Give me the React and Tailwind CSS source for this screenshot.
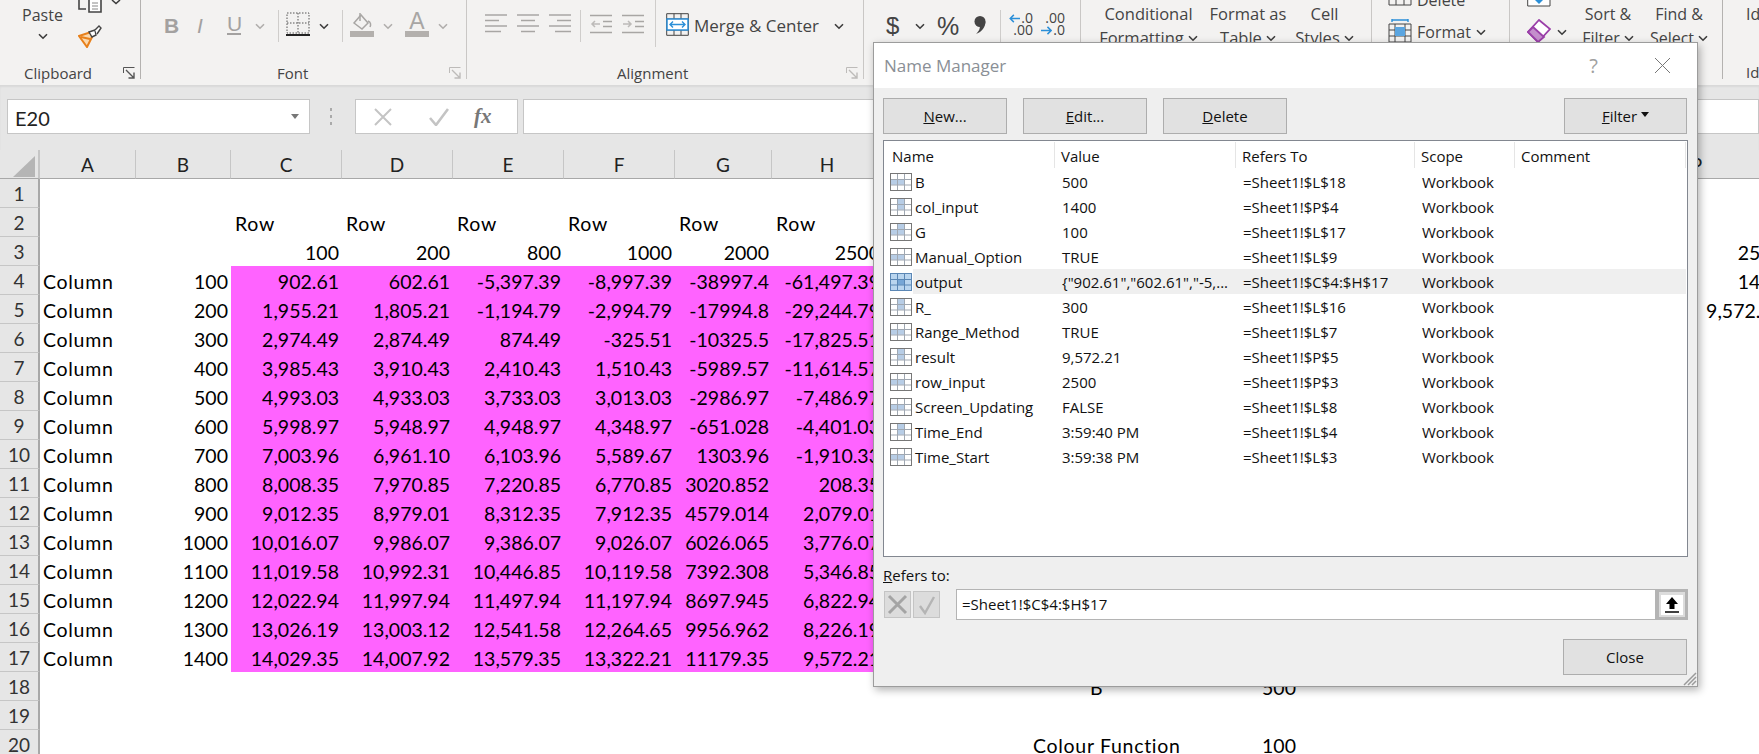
import React from "react";

const ROW_DATA = [
  [100, "902.61", "602.61", "-5,397.39", "-8,997.39", "-38997.4", "-61,497.39"],
  [200, "1,955.21", "1,805.21", "-1,194.79", "-2,994.79", "-17994.8", "-29,244.79"],
  [300, "2,974.49", "2,874.49", "874.49", "-325.51", "-10325.5", "-17,825.51"],
  [400, "3,985.43", "3,910.43", "2,410.43", "1,510.43", "-5989.57", "-11,614.57"],
  [500, "4,993.03", "4,933.03", "3,733.03", "3,013.03", "-2986.97", "-7,486.97"],
  [600, "5,998.97", "5,948.97", "4,948.97", "4,348.97", "-651.028", "-4,401.03"],
  [700, "7,003.96", "6,961.10", "6,103.96", "5,589.67", "1303.96", "-1,910.33"],
  [800, "8,008.35", "7,970.85", "7,220.85", "6,770.85", "3020.852", "208.35"],
  [900, "9,012.35", "8,979.01", "8,312.35", "7,912.35", "4579.014", "2,079.01"],
  [1000, "10,016.07", "9,986.07", "9,386.07", "9,026.07", "6026.065", "3,776.07"],
  [1100, "11,019.58", "10,992.31", "10,446.85", "10,119.58", "7392.308", "5,346.85"],
  [1200, "12,022.94", "11,997.94", "11,497.94", "11,197.94", "8697.945", "6,822.94"],
  [1300, "13,026.19", "13,003.12", "12,541.58", "12,264.65", "9956.962", "8,226.19"],
  [1400, "14,029.35", "14,007.92", "13,579.35", "13,322.21", "11179.35", "9,572.21"],
];

const NAMES = [
  ["B", "500", "=Sheet1!$L$18"],
  ["col_input", "1400", "=Sheet1!$P$4"],
  ["G", "100", "=Sheet1!$L$17"],
  ["Manual_Option", "TRUE", "=Sheet1!$L$9"],
  ["output", '{"902.61","602.61","-5,...', "=Sheet1!$C$4:$H$17"],
  ["R_", "300", "=Sheet1!$L$16"],
  ["Range_Method", "TRUE", "=Sheet1!$L$7"],
  ["result", "9,572.21", "=Sheet1!$P$5"],
  ["row_input", "2500", "=Sheet1!$P$3"],
  ["Screen_Updating", "FALSE", "=Sheet1!$L$8"],
  ["Time_End", "3:59:40 PM", "=Sheet1!$L$4"],
  ["Time_Start", "3:59:38 PM", "=Sheet1!$L$3"],
];

const SHEET_COLS =
  "grid-cols-[40px_96px_95px_111px_111px_111px_111px_97px_111px_147px_160px_109px_331px_156px]";

function Chev({ dark = false, className = "" }) {
  return (
    <svg width="10" height="7" viewBox="0 0 10 7" className={"shrink-0 " + className}>
      <path d="M1 1.2 5 5.2 9 1.2" fill="none" stroke={dark ? "#3c3c3c" : "#b0aeac"} strokeWidth="1.6" />
    </svg>
  );
}

function Launcher({ faded = false, className = "" }) {
  const c = faded ? "#bdbbb9" : "#555";
  return (
    <svg width="12" height="12" viewBox="0 0 12 12" className={"shrink-0 " + className}>
      <path d="M.5 6V.5H11.5" fill="none" stroke={c} />
      <path d="M3 3l7.5 7.5M11 5.5V11H5.5" fill="none" stroke={c} strokeWidth="1.4" />
    </svg>
  );
}

function AlignIcon({ lines }) {
  return (
    <svg width="22" height="22" viewBox="0 0 22 22" className="shrink-0">
      {lines.map(([x1, x2], i) => (
        <path key={i} d={`M${x1} ${2 + i * 5.5}H${x2}`} stroke="#a8a6a4" strokeWidth="1.5" />
      ))}
    </svg>
  );
}

function IndentIcon({ dir }) {
  const arrow = dir === "left" ? "M10 11H2M5 8 2 11l3 3" : "M1 11H9M6 8l3 3-3 3";
  return (
    <svg width="22" height="22" viewBox="0 0 22 22" className="shrink-0">
      <path d="M0 2.5h22M0 19.5h22M13 8.5h9M13 13.5h9" stroke="#a8a6a4" strokeWidth="1.5" />
      <path d={arrow} fill="none" stroke="#bdbbb9" strokeWidth="1.5" />
    </svg>
  );
}

function Sep({ className = "h-[32px] mt-[10px]" }) {
  return <div className={"w-px shrink-0 bg-[#cfcdcb] " + className} />;
}

function SmallArrowNum({ top, bottom, arrowTop }) {
  return (
    <div className="flex flex-col w-[24px] shrink-0 mt-[12px] text-[14px] leading-[12px] text-[#444] text-right">
      <div className="flex items-center justify-end h-[12px]">
        {arrowTop && (
          <svg width="14" height="11" viewBox="0 0 14 11" className="mr-px">
            <path d="M14 5.5H2M6 1 1.5 5.5 6 10" fill="none" stroke="#2b8fd8" strokeWidth="1.8" />
          </svg>
        )}
        {top}
      </div>
      <div className="flex items-center justify-end h-[12px]">
        {!arrowTop && (
          <svg width="14" height="11" viewBox="0 0 14 11" className="mr-px">
            <path d="M0 5.5H12M8 1l4.5 4.5L8 10" fill="none" stroke="#2b8fd8" strokeWidth="1.8" />
          </svg>
        )}
        {bottom}
      </div>
    </div>
  );
}

function Ribbon() {
  return (
    <div className="h-[85px] shrink-0 flex bg-[#f3f2f1] text-[#444] overflow-hidden font-['Open_Sans',sans-serif]">
      {/* Clipboard */}
      <div className="w-[141px] h-[79px] shrink-0 border-r border-[#b4b2b0] flex flex-col">
        <div className="h-[64px] flex">
          <div className="ml-[22px] w-[41px] flex flex-col items-center">
            <span className="text-[16px] leading-[22px] mt-[4px]">Paste</span>
            <Chev dark className="mt-[7px]" />
          </div>
          <div className="ml-[15px] flex flex-col">
            <div className="flex h-[13px]">
              <svg width="24" height="13" viewBox="0 0 24 13">
                <path d="M1 0V9H8" fill="none" stroke="#444" strokeWidth="1.6" />
                <path d="M11 0V12H23V0" fill="#fff" stroke="#444" strokeWidth="1.6" />
                <path d="M14 3h6M14 6h6M14 9h6" stroke="#888" />
              </svg>
              <svg width="10" height="7" viewBox="0 0 10 7" className="ml-[9px]">
                <path d="M1 0 5 3.6 9 0" fill="none" stroke="#3c3c3c" strokeWidth="1.5" />
              </svg>
            </div>
            <svg width="24" height="23" viewBox="0 0 24 23" className="mt-[12px]">
              <path d="M1 11 13 7l1 5-5 10z" fill="#fbd9ae" stroke="#e8801a" strokeWidth="2" />
              <path d="M3 12 12 14" stroke="#e8801a" strokeWidth="2" />
              <path d="M11 7l6-2 1 5-4 2z" fill="#fff" stroke="#444" strokeWidth="1.4" />
              <path d="M17 5l4-4 2 2-4 6" fill="#fff" stroke="#444" strokeWidth="1.4" />
            </svg>
          </div>
        </div>
        <div className="h-[15px] flex items-center text-[15px]">
          <span className="ml-[24px] leading-[20px] mt-[2px]">Clipboard</span>
          <Launcher className="ml-auto mr-[5px] mt-[2px]" />
        </div>
      </div>

      {/* Font */}
      <div className="w-[326px] h-[79px] shrink-0 border-r border-[#c9c7c5] flex flex-col">
        <div className="h-[64px] flex items-start">
          <span className="ml-[23px] w-[13px] mt-[12px] text-[21px] leading-[28px] font-bold text-[#a3a1a0] font-['Liberation_Sans',sans-serif]">B</span>
          <span className="ml-[20px] w-[9px] mt-[12px] text-[21px] leading-[28px] italic text-[#a3a1a0] font-['Liberation_Sans',sans-serif]">I</span>
          <span className="ml-[21px] w-[14px] mt-[12px] text-[21px] leading-[23px] h-[23px] text-[#a3a1a0] border-b-2 border-[#a3a1a0] text-center font-['Liberation_Sans',sans-serif]">U</span>
          <Chev className="ml-[14px] mt-[23px]" />
          <Sep className="ml-[13px] h-[32px] mt-[10px]" />
          <svg width="24" height="24" viewBox="0 0 24 24" className="ml-[7px] mt-[12px] shrink-0">
            <path d="M1 1h22v20H1zM12 1v20M1 11h22" fill="none" stroke="#555" strokeDasharray="1.5 1.5" />
            <path d="M0 23h24" stroke="#222" strokeWidth="2" />
          </svg>
          <Chev dark className="ml-[9px] mt-[23px]" />
          <Sep className="ml-[13px] h-[32px] mt-[10px]" />
          <svg width="24" height="26" viewBox="0 0 24 26" className="ml-[7px] mt-[12px] shrink-0">
            <path d="M4 11 11 3l7 8-6 6z" fill="none" stroke="#a8a6a4" strokeWidth="1.5" />
            <path d="M10 1v8M18 9c3 1 3 4 2 6" fill="none" stroke="#a8a6a4" strokeWidth="1.5" />
            <rect x="0" y="19" width="24" height="6" fill="#b3b0ad" />
          </svg>
          <Chev className="ml-[9px] mt-[23px]" />
          <div className="ml-[12px] w-[24px] mt-[12px] flex flex-col items-center shrink-0">
            <span className="text-[23px] leading-[19px] h-[19px] text-[#a8a6a4] font-['Liberation_Sans',sans-serif]">A</span>
            <div className="w-[24px] h-[6px] bg-[#b3b0ad]" />
          </div>
          <Chev className="ml-[9px] mt-[23px]" />
        </div>
        <div className="h-[15px] flex items-center text-[15px]">
          <span className="ml-[136px] leading-[20px] mt-[2px]">Font</span>
          <Launcher faded className="ml-auto mr-[5px] mt-[2px]" />
        </div>
      </div>

      {/* Alignment */}
      <div className="w-[397px] h-[79px] shrink-0 border-r border-[#c9c7c5] flex flex-col">
        <div className="h-[64px] flex items-start">
          <div className="ml-[18px] mt-[13px]"><AlignIcon lines={[[0, 22], [0, 14], [0, 22], [0, 16]]} /></div>
          <div className="ml-[10px] mt-[13px]"><AlignIcon lines={[[0, 22], [4, 18], [0, 22], [4, 18]]} /></div>
          <div className="ml-[10px] mt-[13px]"><AlignIcon lines={[[0, 22], [8, 22], [0, 22], [6, 22]]} /></div>
          <Sep className="ml-[9px] h-[32px] mt-[10px]" />
          <div className="ml-[9px] mt-[13px]"><IndentIcon dir="left" /></div>
          <div className="ml-[10px] mt-[13px]"><IndentIcon dir="right" /></div>
          <Sep className="ml-[11px] h-[47px]" />
          <svg width="23" height="23" viewBox="0 0 23 23" className="ml-[10px] mt-[13px] shrink-0">
            <path d="M.7.7h21.6v21.6H.7zM.7 6h21.6M.7 17h21.6M8 .7V6M15 .7V6M8 17v5M15 17v5" fill="none" stroke="#444" />
            <rect x="1" y="6" width="21" height="11" fill="#fff" stroke="#2b8fd8" strokeWidth="1.5" />
            <path d="M4 11.5h15M7 8.500 4 11.500l3 3M16 8.500l3 3-3 3" fill="none" stroke="#2b8fd8" strokeWidth="1.4" />
          </svg>
          <span className="ml-[5px] w-[126px] mt-[14px] text-[17px] leading-[24px] whitespace-nowrap">Merge &amp; Center</span>
          <Chev dark className="ml-[14px] mt-[23px]" />
        </div>
        <div className="h-[15px] flex items-center text-[15px]">
          <span className="ml-[150px] leading-[20px] mt-[2px]">Alignment</span>
          <Launcher faded className="ml-auto mr-[5px] mt-[2px]" />
        </div>
      </div>

      {/* Number */}
      <div className="w-[217px] h-[79px] shrink-0 border-r border-[#c9c7c5] flex items-start">
        <span className="ml-[22px] w-[12px] mt-[10px] text-[24px] leading-[32px] font-['Liberation_Sans',sans-serif] font-light">$</span>
        <Chev dark className="ml-[17px] mt-[23px]" />
        <span className="ml-[12px] w-[24px] mt-[10px] text-[25px] leading-[32px] font-['Liberation_Sans',sans-serif]">%</span>
        <svg width="12" height="18" viewBox="0 0 12 18" className="ml-[13px] mt-[16px] shrink-0">
          <circle cx="6" cy="5.500" r="5.500" fill="#444" />
          <path d="M11.500 5.500C11.500 11 8 16 2 18c3-3 4.500-6 3.500-8z" fill="#444" />
        </svg>
        <Sep className="ml-[14px] h-[32px] mt-[10px]" />
        <div className="ml-[8px]"><SmallArrowNum top=".0" bottom=".00" arrowTop /></div>
        <div className="ml-[8px]"><SmallArrowNum top=".00" bottom=".0" /></div>
      </div>

      {/* Styles */}
      <div className="w-[291px] h-[79px] shrink-0 border-r border-[#c9c7c5] flex items-start text-[16.5px] leading-[24px] pt-[2px]">
        <div className="ml-[15px] w-[105px] flex flex-col items-center">
          <span>Conditional</span>
          <span className="flex items-center gap-1">Formatting<Chev dark /></span>
        </div>
        <div className="ml-[8px] w-[78px] flex flex-col items-center">
          <span className="whitespace-nowrap">Format as</span>
          <span className="flex items-center gap-1">Table<Chev dark /></span>
        </div>
        <div className="ml-[7px] w-[61px] flex flex-col items-center">
          <span>Cell</span>
          <span className="flex items-center gap-1">Styles<Chev dark /></span>
        </div>
      </div>

      {/* Cells */}
      <div className="w-[138px] h-[79px] shrink-0 border-r border-[#c9c7c5] flex flex-col pl-[16px] -mt-[12px] text-[16px] leading-[24px]">
        <div className="flex items-center">
          <svg width="24" height="24" viewBox="0 0 24 24" className="shrink-0">
            <path d="M1 1h22v16H1zM8 1v16M16 1v16" fill="none" stroke="#444" />
          </svg>
          <span className="ml-[5px]">Delete</span>
        </div>
        <div className="flex items-center mt-[8px]">
          <svg width="24" height="24" viewBox="0 0 24 24" className="shrink-0 -mt-[2px]">
            <path d="M1 5h22v18H1zM1 11h22M1 17h22M7 5v18M17 5v18" fill="none" stroke="#444" />
            <rect x="7" y="8" width="10" height="9" fill="#5aa5e0" />
            <path d="M4 1h16M4 0v3M20 0v3" fill="none" stroke="#2b8fd8" strokeWidth="1.4" />
          </svg>
          <span className="ml-[5px]">Format</span>
          <Chev dark className="ml-[5px]" />
        </div>
      </div>

      {/* Editing */}
      <div className="w-[213px] h-[79px] shrink-0 border-r border-[#b4b2b0] flex items-start text-[16px] leading-[24px]">
        <div className="ml-[17px] w-[24px] flex flex-col shrink-0">
          <svg width="24" height="7" viewBox="0 0 24 7">
            <path d="M.7 0V6H23V0" fill="#fff" stroke="#444" />
            <path d="M8 0h8l-4 4z" fill="#2b8fd8" />
          </svg>
          <svg width="24" height="24" viewBox="0 0 24 24" className="mt-[12px]">
            <path d="M12 1 23 10 11 23 1 13z" fill="#fff" stroke="#9a3fa8" strokeWidth="1.8" />
            <path d="M6 8 17 18 11 23 1 13z" fill="#c48fcc" stroke="#9a3fa8" strokeWidth="1.8" />
          </svg>
        </div>
        <Chev dark className="ml-[6px] mt-[29px]" />
        <div className="ml-[11px] w-[60px] flex flex-col items-center mt-[2px]">
          <span>Sort &amp;</span>
          <span className="flex items-center gap-1">Filter<Chev dark /></span>
        </div>
        <div className="ml-[10px] w-[62px] flex flex-col items-center mt-[2px]">
          <span>Find &amp;</span>
          <span className="flex items-center gap-1">Select<Chev dark /></span>
        </div>
      </div>

      {/* Ideas, cut off by the window edge */}
      <div className="flex flex-col pl-[23px] text-[16px] leading-[24px]">
        <span className="mt-[2px]">Id</span>
        <span className="mt-[36px] text-[15px] leading-[20px]">Id</span>
      </div>
    </div>
  );
}

function FormulaBar() {
  return (
    <div className="h-[65px] shrink-0 bg-[#e6e6e6] pl-[7px] pt-[14px] flex items-start shadow-[inset_0_2px_2px_rgba(0,0,0,0.06)]">
      <div className="w-[303px] h-[35px] bg-white border border-[#c6c6c6] flex items-center pl-[7px] pr-[10px] text-[20px] text-[#222] font-['Lato',sans-serif]">
        <span className="mt-[2px]">E20</span>
        <svg width="8" height="5" viewBox="0 0 8 5" className="ml-auto"><path d="M0 0h8L4 5z" fill="#777" /></svg>
      </div>
      <svg width="4" height="17" viewBox="0 0 4 17" className="ml-[19px] mt-[9px] shrink-0">
        <path d="M2 0v3M2 7v3M2 14v3" stroke="#aaa" strokeWidth="2" />
      </svg>
      <div className="ml-[22px] w-[163px] h-[35px] bg-white border border-[#c6c6c6] flex items-center shrink-0">
        <svg width="18" height="18" viewBox="0 0 18 18" className="ml-[18px]">
          <path d="M1 1l16 16M17 1 1 17" stroke="#c4c4c4" strokeWidth="2" />
        </svg>
        <svg width="20" height="18" viewBox="0 0 20 18" className="ml-[37px]">
          <path d="M1 10l6 7L19 1" fill="none" stroke="#c4c4c4" strokeWidth="2.6" />
        </svg>
        <span className="ml-[25px] text-[21px] italic font-bold text-[#777] font-['Liberation_Serif',serif]">fx</span>
      </div>
      <div className="ml-[5px] flex-1 h-[35px] bg-white border border-[#c6c6c6]" />
    </div>
  );
}

function Head({ children, className = "" }) {
  return (
    <div className={"h-[29px] bg-[#e6e6e6] border-r border-b border-b-[#a8a8a8] border-r-[#c6c6c6] flex items-center justify-center pt-[2px] text-[19px] text-[#222] " + className}>
      {children}
    </div>
  );
}

function Cell({ children, pink = false, left = false, className = "" }) {
  return (
    <div className={"h-[29px] leading-[31px] whitespace-nowrap text-black " + (left ? "text-left pl-[3px] tracking-[0.7px] " : "text-right pr-[3px] ") + (pink ? "bg-[#ff63ff] " : "") + className}>
      {children}
    </div>
  );
}

function RowNo({ n }) {
  return (
    <div className="h-[29px] bg-[#e6e6e6] border-r-2 border-b border-r-[#a8a8a8] border-b-[#c6c6c6] flex items-center justify-center pt-[2px] text-[19px] text-[#333]">
      {n}
    </div>
  );
}

function Sheet() {
  const rows = [];
  for (let n = 1; n <= 20; n++) {
    const data = n >= 4 && n <= 17 ? ROW_DATA[n - 4] : null;
    let a = null;
    let b = null;
    let k = null;
    let l = null;
    let p = null;
    if (data) {
      a = "Column";
      b = data[0];
    }
    if (n === 18) {
      k = "B";
      l = "500";
    }
    if (n === 20) {
      k = "Colour Function";
      l = "100";
    }
    if (n === 3) p = "2500";
    if (n === 4) p = "1400";
    if (n === 5) p = "9,572.21";
    rows.push(
      <React.Fragment key={n}>
        <RowNo n={n} />
        <Cell left>{a}</Cell>
        <Cell>{b}</Cell>
        {[0, 1, 2, 3, 4, 5].map((i) => {
          if (data) return <Cell key={i} pink>{data[i + 1]}</Cell>;
          if (n === 2) return <Cell key={i} left className="pl-[4px]">Row</Cell>;
          if (n === 3) return <Cell key={i}>{[100, 200, 800, 1000, 2000, 2500][i]}</Cell>;
          return <Cell key={i} />;
        })}
        <Cell />
        <Cell left className={n === 18 ? "pl-[60px]" : ""}>{k}</Cell>
        <Cell>{l}</Cell>
        <Cell />
        <Cell>{p}</Cell>
      </React.Fragment>
    );
  }
  return (
    <div className={"grid w-[1786px] shrink-0 text-[19.5px] font-['Lato',sans-serif] " + SHEET_COLS}>
      <Head className="border-r-2 border-r-[#a8a8a8]">
        <svg width="22" height="21" viewBox="0 0 22 21" className="ml-[10px] mt-[3px]"><path d="M22 0V21H0z" fill="#b5b5b5" /></svg>
      </Head>
      {["A", "B", "C", "D", "E", "F", "G", "H", "I", "K", "L", ""].map((c, i) => (
        <Head key={i}>{c}</Head>
      ))}
      <Head className="pr-[22px]">P</Head>
      {rows}
    </div>
  );
}

function NameIcon({ active, cells }) {
  return (
    <svg width="22" height="18" viewBox="0 0 22 18" className="ml-[6px] shrink-0">
      <rect x=".5" y=".5" width="21" height="17" fill={active ? "#b9d5ef" : "#fff"} stroke={active ? "#5b87b5" : "#777"} />
      {cells.map(([x, y], i) => (
        <rect key={i} x={1 + x * 7} y={1 + y * 5.4} width="7" height="5.400" fill={active ? "#76a6d6" : "#b7cde6"} />
      ))}
      <path d="M7.500 1v16M14.500 1v16M1 6.500h20M1 12h20" stroke={active ? "#5b87b5" : "#a0a8b2"} />
    </svg>
  );
}

function DlgButton({ children, className = "w-[124px]" }) {
  return (
    <button className={"h-[36px] bg-[#e1e1e1] border border-[#adadad] text-[15px] text-[#111] flex items-center justify-center " + className}>
      {children}
    </button>
  );
}

const ICON_CELLS = {
  B: [[0, 1], [1, 1]],
  col_input: [[1, 0], [1, 1]],
  G: [[0, 1], [1, 1], [1, 0]],
  Manual_Option: [[0, 1], [1, 1]],
  output: [[1, 1]],
  R_: [[1, 0], [1, 1]],
  Range_Method: [[0, 1], [1, 1]],
  result: [[1, 1], [1, 0]],
  row_input: [[0, 1], [1, 1]],
  Screen_Updating: [[0, 1], [1, 1]],
  Time_End: [[1, 0], [1, 1]],
  Time_Start: [[0, 1], [1, 1]],
};

function NameManager() {
  return (
    <div className="absolute left-[873px] top-[42px] w-[825px] h-[645px] bg-[#efefef] border border-[#9c9c9c] shadow-[2px_3px_8px_rgba(0,0,0,0.3)] flex flex-col text-[15px] text-[#111] font-['Open_Sans',sans-serif]">
      <div className="h-[45px] shrink-0 bg-white flex items-center pl-[10px]">
        <span className="text-[17px] text-[#8a8f96]">Name Manager</span>
        <span className="ml-auto text-[20px] text-[#a0a0a0]">?</span>
        <svg width="17" height="17" viewBox="0 0 17 17" className="ml-[56px] mr-[26px]">
          <path d="M1 1l15 15M16 1 1 16" stroke="#777" strokeWidth="1" />
        </svg>
      </div>

      <div className="flex pl-[9px] pr-[10px] pt-[10px] gap-[16px] shrink-0">
        <DlgButton><span><u>N</u>ew...</span></DlgButton>
        <DlgButton><span><u>E</u>dit...</span></DlgButton>
        <DlgButton><span><u>D</u>elete</span></DlgButton>
        <DlgButton className="w-[123px] ml-auto">
          <span><u>F</u>ilter</span>
          <svg width="8" height="5" viewBox="0 0 8 5" className="ml-[4px] mb-[3px]"><path d="M0 0h8L4 5z" fill="#111" /></svg>
        </DlgButton>
      </div>

      <div className="mx-[9px] mt-[6px] h-[417px] shrink-0 bg-white border border-[#828790]">
        <div className="grid grid-cols-[171px_181px_179px_100px_171px] h-[28px] items-center">
          {["Name", "Value", "Refers To", "Scope", "Comment"].map((h, i) => (
            <div key={h} className={"h-[26px] leading-[28px] border-r border-[#e5e5e5] " + (i === 0 ? "pl-[8px]" : "pl-[6px]")}>
              {h}
            </div>
          ))}
        </div>
        {NAMES.map(([name, value, refers]) => {
          const active = name === "output";
          return (
            <div key={name} className="flex items-center h-[25px]">
              <div className="w-[29px] shrink-0 flex items-center">
                <NameIcon active={active} cells={ICON_CELLS[name]} />
              </div>
              <div className={"grid grid-cols-[142px_181px_179px_100px_171px] h-[25px] leading-[27px] whitespace-nowrap " + (active ? "bg-[#efefef]" : "")}>
                <div className="pl-[2px]">{name}</div>
                <div className="pl-[7px]">{value}</div>
                <div className="pl-[7px]">{refers}</div>
                <div className="pl-[7px]">Workbook</div>
                <div />
              </div>
            </div>
          );
        })}
      </div>

      <div className="ml-[9px] mt-[8px] h-[20px] leading-[20px] shrink-0"><u>R</u>efers to:</div>

      <div className="flex items-start mx-[9px] mt-[4px] h-[31px] shrink-0">
        <div className="w-[27px] h-[27px] mt-[2px] ml-px bg-[#dcdcdc] border border-[#c4c4c4] flex items-center justify-center">
          <svg width="21" height="21" viewBox="0 0 21 21"><path d="M2 2l17 17M19 2 2 19" stroke="#a4a4a4" strokeWidth="3" /></svg>
        </div>
        <div className="w-[27px] h-[27px] mt-[2px] ml-[2px] bg-[#dcdcdc] border border-[#c4c4c4] flex items-center justify-center">
          <svg width="20" height="20" viewBox="0 0 20 20"><path d="M3 11l5 7L17 2" fill="none" stroke="#b4b4b4" strokeWidth="2.4" /></svg>
        </div>
        <div className="ml-[16px] flex-1 h-[31px] bg-white border border-[#b4b4b4] flex items-center pl-[5px]">
          =Sheet1!$C$4:$H$17
        </div>
        <div className="w-[32px] h-[31px] border-[3px] border-[#b4b4b4] bg-[#dcdcdc] flex items-center justify-center">
          <div className="w-[22px] h-[20px] bg-white flex items-center justify-center">
            <svg width="14" height="16" viewBox="0 0 14 16">
              <path d="M7 0 13 7H9.500v5h-5V7H1z" fill="#000" />
              <path d="M0 15h14" stroke="#000" strokeWidth="1.500" />
            </svg>
          </div>
        </div>
      </div>

      <div className="flex justify-end ml-[9px] mr-[10px] mt-[19px] shrink-0">
        <DlgButton>Close</DlgButton>
      </div>

      <svg width="15" height="15" viewBox="0 0 15 15" className="absolute right-0 bottom-0">
        <path d="M14 2 2 14M14 6 6 14M14 10l-4 4" stroke="#9a9a9a" strokeWidth="1.500" />
      </svg>
    </div>
  );
}

export default function App() {
  return (
    <div className="relative w-[1759px] h-[754px] overflow-hidden bg-white flex flex-col">
      <Ribbon />
      <FormulaBar />
      <Sheet />
      <NameManager />
    </div>
  );
}
